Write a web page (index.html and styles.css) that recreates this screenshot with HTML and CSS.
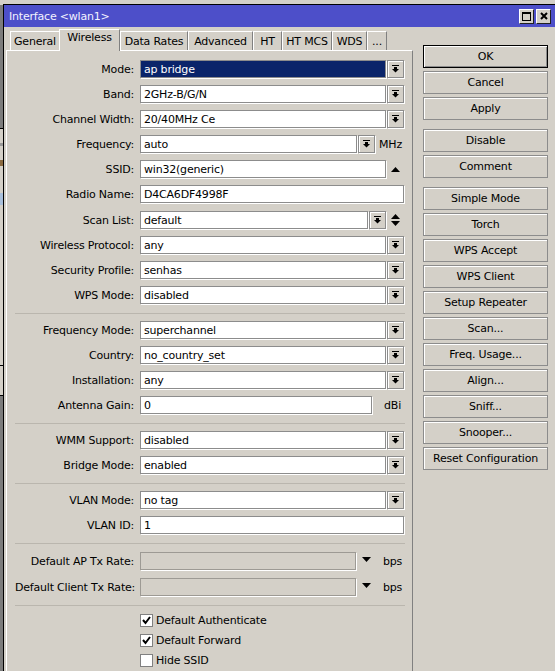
FILE: index.html
```html
<!DOCTYPE html>
<html>
<head>
<meta charset="utf-8">
<link rel="stylesheet" href="styles.css">
</head>
<body>
<div class="screen">
  <div class="bgstrip"></div>
  <div class="window">
    <div class="titlebar">
      <span class="title">Interface &lt;wlan1&gt;</span>
      <div class="tbtns">
        <span class="tbtn"><svg width="9" height="9" viewBox="0 0 9 9"><rect x="0.5" y="0.5" width="8" height="8" fill="none" stroke="#000"/><rect x="0" y="0" width="9" height="2" fill="#000"/></svg></span>
        <span class="tbtn"><svg width="8" height="8" viewBox="0 0 8 8"><path d="M1 1 L7 7 M7 1 L1 7" stroke="#000" stroke-width="2"/></svg></span>
      </div>
    </div>
    <div class="wbody">
      <div class="leftcol">
        <div class="tabs">
          <span class="tab t-general">General</span>
          <span class="tab active">Wireless</span>
          <span class="tab t-rates">Data Rates</span>
          <span class="tab t-adv">Advanced</span>
          <span class="tab t-ht">HT</span>
          <span class="tab t-mcs">HT MCS</span>
          <span class="tab t-wds">WDS</span>
          <span class="tab t-more">...</span>
        </div>
        <div class="panel">
          <div class="section">
            <div class="row"><span class="label">Mode:</span><div class="ctrl"><span class="field selected">ap bridge</span><span class="dd"><svg class="ddi" width="7" height="8" viewBox="0 0 7 8"><rect x="0" y="0" width="7" height="1"/><rect x="2" y="2" width="3" height="2"/><polygon points="0,4 7,4 3.5,7.5"/></svg></span></div></div>
            <div class="row"><span class="label">Band:</span><div class="ctrl"><span class="field">2GHz-B/G/N</span><span class="dd"><svg class="ddi" width="7" height="8" viewBox="0 0 7 8"><rect x="0" y="0" width="7" height="1"/><rect x="2" y="2" width="3" height="2"/><polygon points="0,4 7,4 3.5,7.5"/></svg></span></div></div>
            <div class="row"><span class="label">Channel Width:</span><div class="ctrl"><span class="field">20/40MHz Ce</span><span class="dd"><svg class="ddi" width="7" height="8" viewBox="0 0 7 8"><rect x="0" y="0" width="7" height="1"/><rect x="2" y="2" width="3" height="2"/><polygon points="0,4 7,4 3.5,7.5"/></svg></span></div></div>
            <div class="row"><span class="label">Frequency:</span><div class="ctrl"><span class="field w-217">auto</span><span class="dd"><svg class="ddi" width="7" height="8" viewBox="0 0 7 8"><rect x="0" y="0" width="7" height="1"/><rect x="2" y="2" width="3" height="2"/><polygon points="0,4 7,4 3.5,7.5"/></svg></span><span class="unit">MHz</span></div></div>
            <div class="row"><span class="label">SSID:</span><div class="ctrl"><span class="field w-246">win32(generic)</span><span class="arrows"><svg width="9" height="5" viewBox="0 0 9 5"><polygon points="0,5 9,5 4.5,0"/></svg></span></div></div>
            <div class="row"><span class="label">Radio Name:</span><div class="ctrl"><span class="field">D4CA6DF4998F</span></div></div>
            <div class="row row-scan"><span class="label">Scan List:</span><div class="ctrl"><span class="field w-228">default</span><span class="dd"><svg class="ddi" width="7" height="8" viewBox="0 0 7 8"><rect x="0" y="0" width="7" height="1"/><rect x="2" y="2" width="3" height="2"/><polygon points="0,4 7,4 3.5,7.5"/></svg></span><span class="arrows"><svg width="9" height="12" viewBox="0 0 9 12"><polygon points="0,5 9,5 4.5,0"/><polygon points="0,7 9,7 4.5,12"/></svg></span></div></div>
            <div class="row"><span class="label">Wireless Protocol:</span><div class="ctrl"><span class="field">any</span><span class="dd"><svg class="ddi" width="7" height="8" viewBox="0 0 7 8"><rect x="0" y="0" width="7" height="1"/><rect x="2" y="2" width="3" height="2"/><polygon points="0,4 7,4 3.5,7.5"/></svg></span></div></div>
            <div class="row"><span class="label">Security Profile:</span><div class="ctrl"><span class="field">senhas</span><span class="dd"><svg class="ddi" width="7" height="8" viewBox="0 0 7 8"><rect x="0" y="0" width="7" height="1"/><rect x="2" y="2" width="3" height="2"/><polygon points="0,4 7,4 3.5,7.5"/></svg></span></div></div>
            <div class="row"><span class="label">WPS Mode:</span><div class="ctrl"><span class="field">disabled</span><span class="dd"><svg class="ddi" width="7" height="8" viewBox="0 0 7 8"><rect x="0" y="0" width="7" height="1"/><rect x="2" y="2" width="3" height="2"/><polygon points="0,4 7,4 3.5,7.5"/></svg></span></div></div>
          </div>
          <div class="section">
            <div class="row"><span class="label">Frequency Mode:</span><div class="ctrl"><span class="field">superchannel</span><span class="dd"><svg class="ddi" width="7" height="8" viewBox="0 0 7 8"><rect x="0" y="0" width="7" height="1"/><rect x="2" y="2" width="3" height="2"/><polygon points="0,4 7,4 3.5,7.5"/></svg></span></div></div>
            <div class="row"><span class="label">Country:</span><div class="ctrl"><span class="field">no_country_set</span><span class="dd"><svg class="ddi" width="7" height="8" viewBox="0 0 7 8"><rect x="0" y="0" width="7" height="1"/><rect x="2" y="2" width="3" height="2"/><polygon points="0,4 7,4 3.5,7.5"/></svg></span></div></div>
            <div class="row"><span class="label">Installation:</span><div class="ctrl"><span class="field">any</span><span class="dd"><svg class="ddi" width="7" height="8" viewBox="0 0 7 8"><rect x="0" y="0" width="7" height="1"/><rect x="2" y="2" width="3" height="2"/><polygon points="0,4 7,4 3.5,7.5"/></svg></span></div></div>
            <div class="row"><span class="label">Antenna Gain:</span><div class="ctrl"><span class="field w-232">0</span><span class="unit unit-dbi">dBi</span></div></div>
          </div>
          <div class="section">
            <div class="row"><span class="label">WMM Support:</span><div class="ctrl"><span class="field">disabled</span><span class="dd"><svg class="ddi" width="7" height="8" viewBox="0 0 7 8"><rect x="0" y="0" width="7" height="1"/><rect x="2" y="2" width="3" height="2"/><polygon points="0,4 7,4 3.5,7.5"/></svg></span></div></div>
            <div class="row"><span class="label">Bridge Mode:</span><div class="ctrl"><span class="field">enabled</span><span class="dd"><svg class="ddi" width="7" height="8" viewBox="0 0 7 8"><rect x="0" y="0" width="7" height="1"/><rect x="2" y="2" width="3" height="2"/><polygon points="0,4 7,4 3.5,7.5"/></svg></span></div></div>
          </div>
          <div class="section">
            <div class="row"><span class="label">VLAN Mode:</span><div class="ctrl"><span class="field">no tag</span><span class="dd"><svg class="ddi" width="7" height="8" viewBox="0 0 7 8"><rect x="0" y="0" width="7" height="1"/><rect x="2" y="2" width="3" height="2"/><polygon points="0,4 7,4 3.5,7.5"/></svg></span></div></div>
            <div class="row"><span class="label">VLAN ID:</span><div class="ctrl"><span class="field">1</span></div></div>
          </div>
          <div class="section section-rates">
            <div class="row"><span class="label">Default AP Tx Rate:</span><div class="ctrl"><span class="field disabled w-216"></span><span class="tri"><svg width="9" height="5" viewBox="0 0 9 5"><polygon points="0,0 9,0 4.5,5"/></svg></span><span class="unit">bps</span></div></div>
            <div class="row"><span class="label">Default Client Tx Rate:</span><div class="ctrl"><span class="field disabled w-216"></span><span class="tri"><svg width="9" height="5" viewBox="0 0 9 5"><polygon points="0,0 9,0 4.5,5"/></svg></span><span class="unit">bps</span></div></div>
          </div>
          <div class="section section-checks">
            <div class="check"><span class="box"><svg width="11" height="11" viewBox="0 0 11 11"><path d="M2 5 L4.5 8 L9 2" fill="none" stroke="#000" stroke-width="2"/></svg></span><span>Default Authenticate</span></div>
            <div class="check"><span class="box"><svg width="11" height="11" viewBox="0 0 11 11"><path d="M2 5 L4.5 8 L9 2" fill="none" stroke="#000" stroke-width="2"/></svg></span><span>Default Forward</span></div>
            <div class="check"><span class="box"></span><span>Hide SSID</span></div>
          </div>
        </div>
      </div>
      <div class="buttons">
        <span class="btn default">OK</span>
        <span class="btn">Cancel</span>
        <span class="btn">Apply</span>
        <span class="btn group">Disable</span>
        <span class="btn">Comment</span>
        <span class="btn group">Simple Mode</span>
        <span class="btn">Torch</span>
        <span class="btn">WPS Accept</span>
        <span class="btn">WPS Client</span>
        <span class="btn">Setup Repeater</span>
        <span class="btn">Scan...</span>
        <span class="btn">Freq. Usage...</span>
        <span class="btn">Align...</span>
        <span class="btn">Sniff...</span>
        <span class="btn">Snooper...</span>
        <span class="btn">Reset Configuration</span>
      </div>
    </div>
  </div>
</div>
</body>
</html>
```

FILE: styles.css
```css
html, body {
  margin: 0;
  padding: 0;
}
body {
  background: #d4d0c8;
  font-family: "DejaVu Sans", "Noto Sans", sans-serif;
  font-size: 11px;
  letter-spacing: -0.2px;
  color: #000;
}
.screen {
  display: flex;
  height: 671px;
  overflow: hidden;
}
.bgstrip {
  width: 3px;
  flex: none;
  background: linear-gradient(to bottom,
    #d4d0c8 0 5px,
    #7c7c7c 5px 128px,
    #000 128px 129px,
    #d4d0c8 129px 143px,
    #9a9a9a 143px 146px,
    #d4d0c8 146px 160px,
    #8a6a40 160px 166px,
    #d4d0c8 166px 193px,
    #a9c0dc 193px 205px,
    #d4d0c8 205px 365px,
    #000 365px 366px,
    #d4d0c8 366px 395px,
    #000 395px 396px,
    #7c7c7c 396px 100%);
}
.window {
  flex: 1;
  margin-top: 4px;
  border-top: 1px solid #000;
  border-left: 1px solid #000;
  display: flex;
  flex-direction: column;
  min-width: 0;
}
.titlebar {
  height: 22px;
  flex: none;
  background: #4d4fc9;
  display: flex;
  align-items: center;
  padding-left: 5px;
  color: #f2f2ff;
}
.tbtns {
  margin-left: auto;
  margin-right: 4px;
  display: flex;
  gap: 2px;
}
.tbtn {
  width: 15px;
  height: 15px;
  box-sizing: border-box;
  background: #d4d0c8;
  border: 1px solid;
  border-color: #fff #202020 #202020 #fff;
  display: flex;
  align-items: center;
  justify-content: center;
}
.wbody {
  flex: 1;
  display: flex;
  min-height: 0;
}
.leftcol {
  width: 407px;
  padding-left: 2px;
  flex: none;
  display: flex;
  flex-direction: column;
}
.tabs {
  height: 23px;
  flex: none;
  display: flex;
  align-items: flex-end;
  padding-left: 4px;
}
.tab {
  height: 19px;
  box-sizing: border-box;
  border-top: 1px solid #fff;
  border-left: 1px solid #fff;
  border-right: 1px solid #808080;
  padding: 0;
  display: flex;
  align-items: center;
  justify-content: center;
  white-space: nowrap;
  flex: none;
}
.t-general { width: 50px; }
.t-rates { width: 68px; }
.t-adv { width: 65px; }
.t-ht { width: 29px; }
.t-mcs { width: 50px; }
.t-wds { width: 35px; }
.t-more { width: 20px; }
.tab.active {
  width: 61px;
  height: 22px;
  padding-top: 1px;
  align-items: flex-start;
  margin: 0 0 -1px -1px;
  position: relative;
  z-index: 1;
  background: #d4d0c8;
}
.panel {
  flex: 1;
  border-top: 1px solid #fff;
  border-left: 1px solid #fff;
  border-right: 1px solid #808080;
  padding-top: 9px;
  position: relative;
  z-index: 0;
}
.section {
  margin: 0 7px 0 8px;
  padding-bottom: 9px;
  display: flex;
  flex-direction: column;
  gap: 7px;
}
.section + .section {
  border-top: 1px solid #bab6ae;
  padding-top: 7px;
}
.section.section-rates {
  padding-top: 8px;
  gap: 8px;
}
.section.section-checks {
  padding-top: 8px;
  padding-left: 125px;
}
.row {
  display: flex;
  align-items: center;
  height: 18px;
}
.row-scan {
  margin-top: 1px;
}
.label {
  width: 119px;
  margin-right: 6px;
  flex: none;
  text-align: right;
  white-space: nowrap;
}
.ctrl {
  width: 264px;
  height: 18px;
  display: flex;
  align-items: center;
}
.field {
  flex: 1;
  height: 18px;
  box-sizing: border-box;
  border: 1px solid #8c8c8c;
  background: #fff;
  box-shadow: 1px 1px 0 #fff;
  padding-left: 3px;
  display: flex;
  align-items: center;
  white-space: nowrap;
  overflow: hidden;
}
.field.selected {
  background: #0a246a;
  color: #fff;
}
.field.disabled {
  background: #d4d0c8;
  border-color: #9d9a94;
}
.w-216 { flex: none; width: 216px; }
.w-217 { flex: none; width: 217px; }
.w-228 { flex: none; width: 228px; }
.w-232 { flex: none; width: 232px; }
.w-246 { flex: none; width: 246px; }
.dd {
  width: 17px;
  height: 18px;
  flex: none;
  box-sizing: border-box;
  margin-left: 1px;
  border: 1px solid #8c8c8c;
  box-shadow: inset 1px 1px 0 #fff, 1px 1px 0 #fff;
  background: #d4d0c8;
  display: flex;
  align-items: center;
  justify-content: center;
}
.ddi {
  fill: #000;
}
.arrows {
  flex: 1;
  display: flex;
  align-items: center;
  justify-content: center;
}
.tri {
  width: 20px;
  flex: none;
  display: flex;
  justify-content: center;
  align-items: center;
  margin-top: -4px;
}
.unit {
  flex: 1;
  text-align: right;
  padding-right: 2px;
}
.unit-dbi {
  padding-right: 3px;
}
.check {
  display: flex;
  align-items: center;
  height: 13px;
  gap: 3px;
}
.section-checks {
  gap: 7px;
}
.box {
  width: 13px;
  height: 13px;
  box-sizing: border-box;
  border: 1px solid #808080;
  background: #fff;
  display: flex;
  align-items: center;
  justify-content: center;
}
.buttons {
  width: 125px;
  margin-left: 10px;
  padding-top: 18px;
  flex: none;
  display: flex;
  flex-direction: column;
  gap: 3px;
}
.btn {
  height: 23px;
  box-sizing: border-box;
  border: 1px solid #8c8c8c;
  box-shadow: inset 1px 1px 0 #fff;
  display: flex;
  align-items: center;
  justify-content: center;
  white-space: nowrap;
}
.btn.default {
  border-color: #000;
  box-shadow: inset 1px 1px 0 #fff, inset -1px -1px 0 #8c8c8c;
}
.btn.group {
  margin-top: 6px;
}
```
